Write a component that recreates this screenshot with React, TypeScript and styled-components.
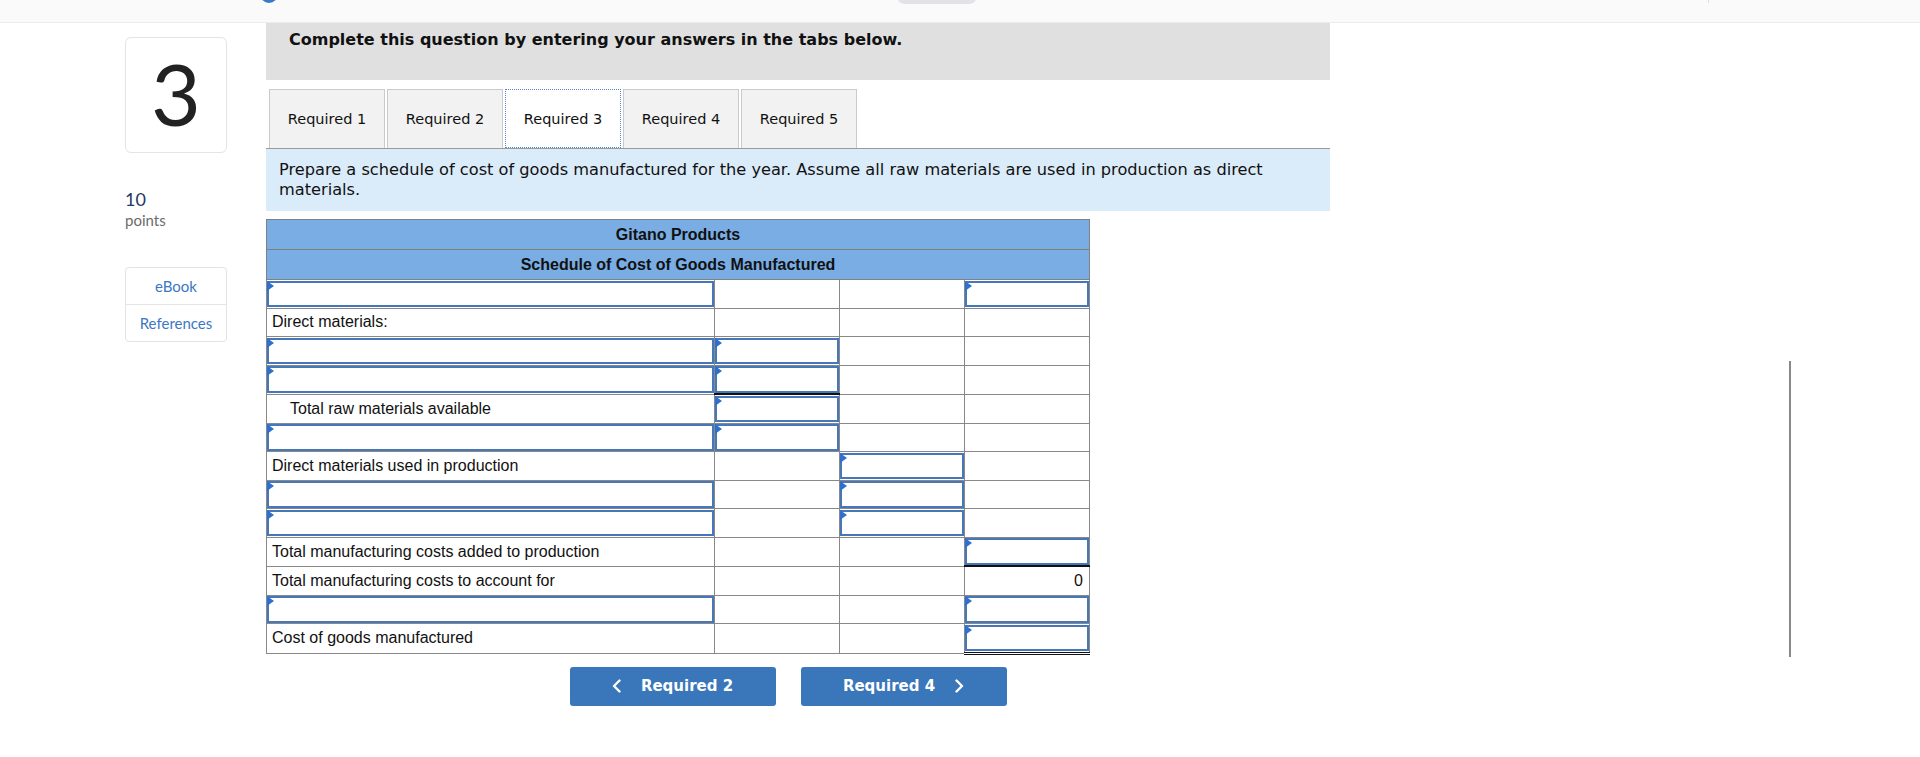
import React from "react"
import styled, { createGlobalStyle } from "styled-components"

type Cell =
  | { kind: "empty" }
  | { kind: "label"; text: string; indent?: boolean }
  | { kind: "input"; underline?: "single" | "double" }
  | { kind: "value"; text: string }

const E: Cell = { kind: "empty" }
const I: Cell = { kind: "input" }
const label = (text: string, indent = false): Cell => ({ kind: "label", text, indent })

const rows: Cell[][] = [
  [I, E, E, I],
  [label("Direct materials:"), E, E, E],
  [I, I, E, E],
  [I, { kind: "input", underline: "single" }, E, E],
  [label("Total raw materials available", true), I, E, E],
  [I, I, E, E],
  [label("Direct materials used in production"), E, I, E],
  [I, E, I, E],
  [I, E, I, E],
  [label("Total manufacturing costs added to production"), E, E, { kind: "input", underline: "single" }],
  [label("Total manufacturing costs to account for"), E, E, { kind: "value", text: "0" }],
  [I, E, E, I],
  [label("Cost of goods manufactured"), E, E, { kind: "input", underline: "double" }],
]

const tabs = ["Required 1", "Required 2", "Required 3", "Required 4", "Required 5"]

const GlobalStyle = createGlobalStyle`
  body {
    margin: 0;
    background: #fff;
    font-family: "DejaVu Sans", Verdana, sans-serif;
    color: #111;
  }
`

export default function App() {
  return (
    <>
      <GlobalStyle />
      <TopBar>
        <TopDot />
        <TopPill />
        <TopTick />
      </TopBar>
      <Main>
        <Sidebar>
          <QuestionNumber>3</QuestionNumber>
          <Points>
            <PointsValue>10</PointsValue>
            <PointsLabel>points</PointsLabel>
          </Points>
          <Resources>
            <ResourceLink>eBook</ResourceLink>
            <ResourceLink>References</ResourceLink>
          </Resources>
        </Sidebar>

        <Content>
          <Instructions>Complete this question by entering your answers in the tabs below.</Instructions>
          <TabStrip>
            {tabs.map((t) => (
              <Tab key={t} $active={t === "Required 3"}>{t}</Tab>
            ))}
          </TabStrip>
          <Prompt>
            Prepare a schedule of cost of goods manufactured for the year. Assume all raw materials are used in
            production as direct materials.
          </Prompt>

          <Schedule>
            <colgroup>
              <col style={{ width: 448 }} />
              <col style={{ width: 125 }} />
              <col style={{ width: 125 }} />
              <col style={{ width: 125 }} />
            </colgroup>
            <thead>
              <tr>
                <HeadCell colSpan={4}>Gitano Products</HeadCell>
              </tr>
              <tr>
                <HeadCell colSpan={4}>Schedule of Cost of Goods Manufactured</HeadCell>
              </tr>
            </thead>
            <tbody>
              {rows.map((row, r) => (
                <tr key={r}>
                  {row.map((cell, c) => (
                    <BodyCell
                      key={c}
                      $underline={cell.kind === "input" ? cell.underline : undefined}
                      $align={cell.kind === "value" ? "right" : "left"}
                      $indent={cell.kind === "label" && !!cell.indent}
                    >
                      {cell.kind === "label" && cell.text}
                      {cell.kind === "value" && cell.text}
                      {cell.kind === "input" && (
                        <InputBox>
                          <Marker />
                        </InputBox>
                      )}
                    </BodyCell>
                  ))}
                </tr>
              ))}
            </tbody>
          </Schedule>

          <NavRow>
            <NavButton>
              <Chevron dir="left" />
              Required 2
            </NavButton>
            <NavButton>
              Required 4
              <Chevron dir="right" />
            </NavButton>
          </NavRow>
        </Content>

        <RightRule />
      </Main>
    </>
  )
}

const Chevron = ({ dir }: { dir: "left" | "right" }) => (
  <svg width="9" height="14" viewBox="0 0 9 14">
    <polyline
      points={dir === "left" ? "7.5,1.5 2,7 7.5,12.5" : "1.5,1.5 7,7 1.5,12.5"}
      fill="none"
      stroke="#fff"
      strokeWidth="2.4"
      strokeLinecap="round"
      strokeLinejoin="round"
    />
  </svg>
)

const TopBar = styled.div`
  height: 22px;
  background: #fafafa;
  border-bottom: 1px solid #ececec;
  display: flex;
  align-items: flex-start;
  overflow: hidden;
`

const TopDot = styled.div`
  width: 18px;
  height: 18px;
  margin-top: -15px;
  margin-left: 260px;
  border-radius: 50%;
  background: #3a78c9;
`

const TopPill = styled.div`
  width: 80px;
  height: 20px;
  margin-top: -16px;
  margin-left: 619px;
  border-radius: 8px;
  background: #e4e2e6;
`

const TopTick = styled.div`
  width: 1px;
  height: 3px;
  margin-left: 731px;
  background: #dcdcdc;
`

const Main = styled.div`
  display: flex;
  align-items: flex-start;
  padding-left: 125px;
`

const Sidebar = styled.div`
  width: 102px;
  display: flex;
  flex-direction: column;
  font-family: Lato, "Open Sans", sans-serif;
`

const QuestionNumber = styled.div`
  margin-top: 14px;
  height: 116px;
  box-sizing: border-box;
  border: 1px solid #e4e4e4;
  border-radius: 6px;
  display: flex;
  align-items: center;
  justify-content: center;
  font-size: 86px;
  line-height: 1;
  color: #222;
  padding-bottom: 4px;
`

const Points = styled.div`
  margin-top: 35px;
  display: flex;
  flex-direction: column;
`

const PointsValue = styled.span`
  font-size: 18px;
  line-height: 22px;
  color: #1f3963;
`

const PointsLabel = styled.span`
  font-size: 15px;
  line-height: 20px;
  color: #6b6b6b;
`

const Resources = styled.div`
  margin-top: 37px;
  border: 1px solid #e3e3e3;
  border-radius: 4px;
  display: flex;
  flex-direction: column;
`

const ResourceLink = styled.div`
  height: 36px;
  display: flex;
  align-items: center;
  justify-content: center;
  font-size: 15px;
  color: #3b78c4;

  & + & {
    border-top: 1px solid #e6e6e6;
  }
`

const Content = styled.div`
  width: 1064px;
  margin-left: 39px;
  display: flex;
  flex-direction: column;
`

const Instructions = styled.div`
  height: 57px;
  box-sizing: border-box;
  padding: 7px 0 0 23px;
  background: #e0e0e0;
  font-weight: bold;
  font-size: 16px;
  line-height: 20px;
  color: #111;
`

const TabStrip = styled.div`
  margin-top: 9px;
  padding-left: 3px;
  display: flex;
  gap: 2px;
`

const Tab = styled.div<{ $active?: boolean }>`
  width: 116px;
  height: 59px;
  box-sizing: border-box;
  display: flex;
  align-items: center;
  justify-content: center;
  font-size: 14.5px;
  color: #111;
  background: ${(p) => (p.$active ? "#fff" : "#f2f2f2")};
  border: 1px ${(p) => (p.$active ? "dotted #4f86cc" : "solid #cacaca")};
  border-bottom: ${(p) => (p.$active ? "1px dotted #4f86cc" : "none")};
`

const Prompt = styled.div`
  border-top: 1px solid #9a9a9a;
  background: #daebf9;
  padding: 11px 13px 11px 13px;
  font-size: 16.2px;
  line-height: 20px;
  color: #111;
`

const Schedule = styled.table`
  margin-top: 8px;
  width: 823px;
  table-layout: fixed;
  border-collapse: collapse;
  font-family: "Liberation Sans", Arial, sans-serif;
  font-size: 16px;
  color: #111;
`

const HeadCell = styled.th`
  height: 29px;
  padding: 0;
  background: #79ade4;
  border: 1px solid #808080;
  font-weight: bold;
  text-align: center;
`

const BodyCell = styled.td<{ $underline?: "single" | "double"; $align: "left" | "right"; $indent: boolean }>`
  height: 27.5px;
  padding: 0 6px 0 ${(p) => (p.$indent ? "23px" : "5px")};
  border: 1px solid #888;
  text-align: ${(p) => p.$align};
  vertical-align: middle;
  white-space: nowrap;

  &:has(> div) {
    padding: 0;
  }

  ${(p) => p.$underline === "single" && "border-bottom: 2px solid #111;"}
  ${(p) => p.$underline === "double" && "border-bottom: 3px double #111;"}
`

const InputBox = styled.div`
  position: relative;
  height: 26.5px;
  box-sizing: border-box;
  border: 2px solid #4677b9;
  background: #fff;
`

const Marker = styled.span`
  position: absolute;
  left: -2px;
  top: -2px;
  width: 0;
  height: 0;
  border-top: 5px solid transparent;
  border-bottom: 5px solid transparent;
  border-left: 7px solid #2f6fcf;
`

const NavRow = styled.div`
  margin-top: 12px;
  padding-right: 20px;
  display: flex;
  justify-content: center;
  gap: 25px;
`

const NavButton = styled.button`
  width: 206px;
  height: 39px;
  border: none;
  border-radius: 3px;
  background: #3a76ba;
  color: #fff;
  font-family: "DejaVu Sans", Verdana, sans-serif;
  font-weight: bold;
  font-size: 15px;
  display: flex;
  align-items: center;
  justify-content: center;
  gap: 20px;
  cursor: pointer;
`

const RightRule = styled.div`
  width: 2px;
  height: 296px;
  margin-top: 338px;
  margin-left: 459px;
  background: #888;
`
